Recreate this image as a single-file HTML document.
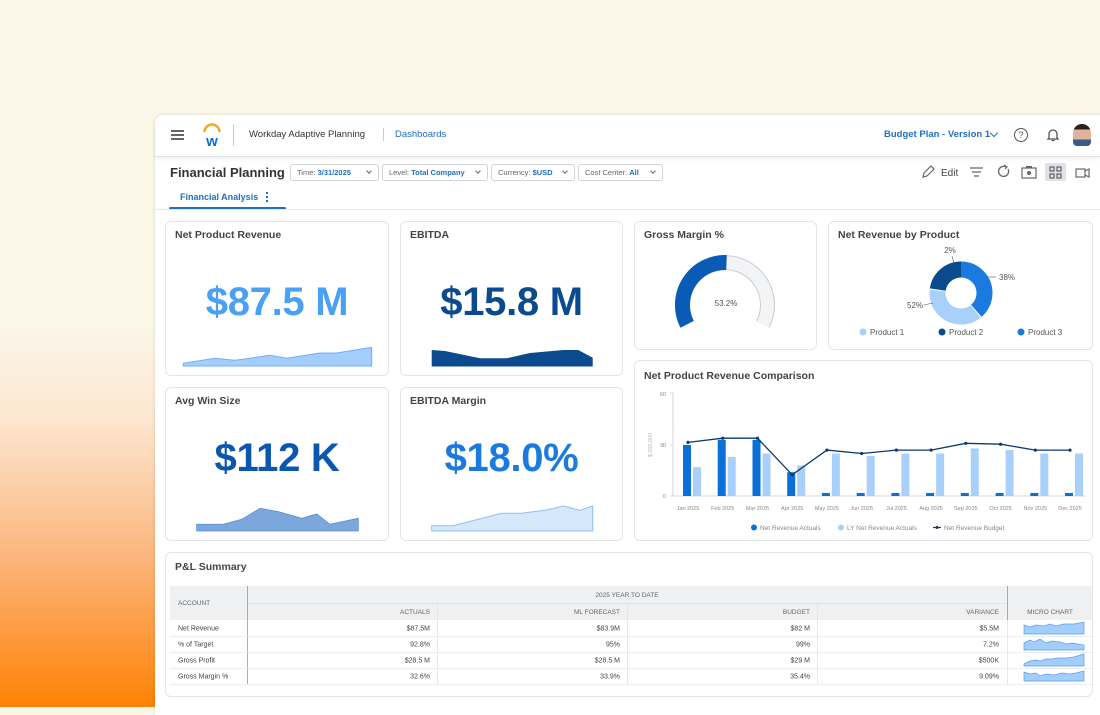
<!DOCTYPE html>
<html><head><meta charset="utf-8">
<style>
*{margin:0;padding:0;box-sizing:border-box}
body{width:1100px;height:707px;overflow:hidden;position:relative;font-family:"Liberation Sans",sans-serif;background:linear-gradient(180deg,#faf6e8 0px,#faf6e8 330px,#fde6d0 420px,#fbb47a 560px,#ff8204 707px)}
.a{position:absolute}
.app{position:absolute;left:155px;top:115px;width:960px;height:600px;background:#fff;border-radius:8px 0 0 0;box-shadow:0 0 3px rgba(0,0,0,.15)}
.hdr{position:absolute;left:155px;top:115px;width:945px;height:42px;border-bottom:1px solid #e4e4e4;box-shadow:0 2px 3px rgba(0,0,0,.06);border-radius:8px 0 0 0;background:#fff}
.card{position:absolute;background:#fff;border:1px solid #e3e5e8;border-radius:6px}
.ct{position:absolute;left:9px;top:7px;font-size:10.5px;font-weight:bold;color:#444}
.big{position:absolute;left:0;right:0;text-align:center;font-weight:bold;font-size:40px;letter-spacing:-0.3px}
.f{position:absolute;top:164px;height:17px;border:1px solid #cfd3d8;border-radius:3px;font-size:7.5px;color:#666;line-height:15px;padding-left:6px;white-space:nowrap}
.f b{color:#1f6fc5}
.f i{position:absolute;right:7px;top:4px;width:4px;height:4px;border-right:1px solid #666;border-bottom:1px solid #666;transform:rotate(45deg)}
</style></head><body>
<div class="app"></div>
<div class="hdr"></div>
<!-- header -->
<div class="a" style="left:171px;top:130px;width:13px;height:1.5px;background:#666;box-shadow:0 4px 0 #666,0 8px 0 #666"></div>
<svg class="a" style="left:201px;top:123px" width="22" height="24"><path d="M3.5 9 A7.5 7.5 0 0 1 18.5 9" fill="none" stroke="#f5a623" stroke-width="2.5"/><text x="11" y="23" text-anchor="middle" font-family="Liberation Sans" font-weight="bold" font-size="15" fill="#0a6fd6">w</text></svg>
<div class="a" style="left:233px;top:124px;width:1px;height:22px;background:#ccc"></div>
<div class="a" style="left:249px;top:129px;font-size:9.5px;color:#333">Workday Adaptive Planning</div>
<div class="a" style="left:383px;top:128px;width:1px;height:13px;background:#ccc"></div>
<div class="a" style="left:395px;top:129px;font-size:9.5px;color:#1f6fc5">Dashboards</div>
<div class="a" style="left:884px;top:129px;font-size:9.5px;color:#1f6fc5;font-weight:bold">Budget Plan - Version 1</div>
<div class="a" style="left:991px;top:130px;width:6px;height:6px;border-right:1.3px solid #1f6fc5;border-bottom:1.3px solid #1f6fc5;transform:rotate(45deg)"></div>
<div class="a" style="left:1014px;top:128px;width:14px;height:14px;border:1.4px solid #555;border-radius:50%;font-size:9px;color:#555;text-align:center;line-height:12px">?</div>
<svg class="a" style="left:1045px;top:127px" width="16" height="16"><path d="M4 11 V7 a4 4 0 0 1 8 0 V11 L13 12 H3 Z M6.5 13.5 h3" fill="none" stroke="#555" stroke-width="1.3"/></svg>
<div class="a" style="left:1073px;top:124px;width:18px;height:22px;border-radius:9px 9px 4px 4px;background:linear-gradient(180deg,#2a2222 0 25%,#e0b49a 25% 70%,#3a5a8a 70%)"></div>
<!-- toolbar -->
<div class="a" style="left:170px;top:165px;font-size:13px;font-weight:bold;color:#333">Financial Planning</div>
<div class="f" style="left:290px;width:89px">Time: <b>3/31/2025</b><i></i></div>
<div class="f" style="left:382px;width:106px">Level: <b>Total Company</b><i></i></div>
<div class="f" style="left:491px;width:84px">Currency: <b>$USD</b><i></i></div>
<div class="f" style="left:578px;width:85px">Cost Center: <b>All</b><i></i></div>
<div class="a" style="left:180px;top:192px;font-size:9px;font-weight:bold;color:#1f6fc5">Financial Analysis</div>
<div class="a" style="left:266px;top:192px;width:2px;height:2px;background:#1f6fc5;box-shadow:0 4px 0 #1f6fc5,0 8px 0 #1f6fc5"></div>
<div class="a" style="left:169px;top:207px;width:117px;height:3px;background:#1f6fc5;border-radius:2px"></div>
<div class="a" style="left:155px;top:209px;width:945px;height:1px;background:#e8e8e8"></div>
<svg class="a" style="left:920px;top:163px" width="180" height="18">
<path d="M3 14 L4 10 L11 3 L14 6 L7 13 Z" fill="none" stroke="#666" stroke-width="1.2"/>
<text x="21" y="13" font-family="Liberation Sans" font-size="10" fill="#444">Edit</text>
<path d="M50 5 h13 M52 9 h9 M54 13 h5" stroke="#666" stroke-width="1.3"/>
<path d="M86 4 A5 5 0 1 0 88 6" fill="none" stroke="#666" stroke-width="1.3"/><path d="M84 2 l3 2 -2 2" fill="none" stroke="#666" stroke-width="1.1"/>
<rect x="102" y="5" width="14" height="10" fill="none" stroke="#666" stroke-width="1.2"/><rect x="106" y="3" width="6" height="2" fill="#666"/><circle cx="109" cy="10" r="2" fill="#666"/>
<rect x="125" y="-1" width="21" height="20" rx="3" fill="#dfe3e8"/>
<rect x="130" y="4" width="4" height="4" fill="none" stroke="#555" stroke-width="1.1"/><rect x="137" y="4" width="4" height="4" fill="none" stroke="#555" stroke-width="1.1"/><rect x="130" y="11" width="4" height="4" fill="none" stroke="#555" stroke-width="1.1"/><rect x="137" y="11" width="4" height="4" fill="none" stroke="#555" stroke-width="1.1"/>
<rect x="156" y="6" width="9" height="8" fill="none" stroke="#666" stroke-width="1.2"/><path d="M165 8 l4 -2 v8 l-4 -2" fill="none" stroke="#666" stroke-width="1.2"/>
</svg>
<!-- cards -->
<div class="card" style="left:165px;top:221px;width:224px;height:155px"><div class="ct">Net Product Revenue</div><div class="big" style="top:58px;color:#4aa0f5">$87.5 M</div></div>
<div class="card" style="left:400px;top:221px;width:223px;height:155px"><div class="ct">EBITDA</div><div class="big" style="top:58px;color:#0b4a8f">$15.8 M</div></div>
<div class="card" style="left:165px;top:387px;width:224px;height:154px"><div class="ct">Avg Win Size</div><div class="big" style="top:48px;color:#0b57b0">$112 K</div></div>
<div class="card" style="left:400px;top:387px;width:223px;height:154px"><div class="ct">EBITDA Margin</div><div class="big" style="top:48px;color:#1a7ae0">$18.0%</div></div>
<div class="card" style="left:634px;top:221px;width:183px;height:129px"><div class="ct">Gross Margin %</div></div>
<div class="card" style="left:828px;top:221px;width:265px;height:129px"><div class="ct">Net Revenue by Product</div></div>
<div class="card" style="left:634px;top:360px;width:459px;height:181px"><div class="ct" style="top:9px">Net Product Revenue Comparison</div></div>
<div class="card" style="left:165px;top:552px;width:928px;height:145px"><div class="ct" style="top:8px">P&amp;L Summary</div></div>
<svg class="a" style="left:0;top:0" width="1100" height="707" font-family="Liberation Sans">
<path d="M183.3 363.3 L215 358.3 235 360.3 270 355.3 286.7 358.3 320 353 336.7 353 371.7 347.3 V366 H183.3Z" fill="#a3cdfb" stroke="#6fb0f5" stroke-width="1"/>
<path d="M431.7 350 L445 351 480 358.3 506.7 358.3 530 353 563.3 350 578.3 350 592.7 357.7 V366.5 H431.7Z" fill="#0b4a8f"/>
<path d="M196.7 524.3 L223.3 524.3 241.7 519.3 260 508.3 278.3 511.7 301.7 518.3 316.7 514 330 524.3 358.3 518.3 V531 H196.7Z" fill="#7ba7dc" stroke="#5a8fd0" stroke-width="0.8"/>
<path d="M431.7 525.7 L453.3 525.7 501.7 513.3 521.7 513.3 546.7 510 563.3 506 580 510.3 592.7 506 V531 H431.7Z" fill="#d6e8fc" stroke="#8dbff5" stroke-width="1"/>
<path d="M687.1 324.3 A42.5 42.5 0 1 1 762.9 324.3" fill="none" stroke="#c9ccd1" stroke-width="15"/>
<path d="M687.1 324.3 A42.5 42.5 0 1 1 762.9 324.3" fill="none" stroke="#f3f4f6" stroke-width="13"/>
<path d="M687.1 324.3 A42.5 42.5 0 0 1 726.5 262.5" fill="none" stroke="#0a5bb5" stroke-width="15"/>
<text x="726" y="306" text-anchor="middle" font-size="8" fill="#555">53.2%</text>
<g transform="rotate(-90 961 293)">
<circle cx="961" cy="293" r="23.5" fill="none" stroke="#1a7ae0" stroke-width="16" stroke-dasharray="57 200"/>
<circle cx="961" cy="293" r="23.5" fill="none" stroke="#a8d0fa" stroke-width="16" stroke-dasharray="0 58 55 200"/>
<circle cx="961" cy="293" r="23.5" fill="none" stroke="#0b4a8c" stroke-width="16" stroke-dasharray="0 114 35.5 200"/>
</g>
<text x="950" y="253" text-anchor="middle" font-size="8" fill="#555">2%</text><path d="M952 256 L954 263" stroke="#555" stroke-width="0.6"/>
<text x="999" y="280" font-size="8" fill="#555">38%</text><path d="M988 277 L996 277" stroke="#555" stroke-width="0.6"/>
<text x="907" y="308" font-size="8" fill="#555">52%</text><path d="M924 305 L933 303" stroke="#555" stroke-width="0.6"/>
<circle cx="863" cy="332" r="3.5" fill="#a8d0fa"/><text x="870" y="335" font-size="8" fill="#555">Product 1</text>
<circle cx="942" cy="332" r="3.5" fill="#0b4a8c"/><text x="949" y="335" font-size="8" fill="#555">Product 2</text>
<circle cx="1021" cy="332" r="3.5" fill="#1a7ae0"/><text x="1028" y="335" font-size="8" fill="#555">Product 3</text>
<g font-size="5.5" fill="#888">
<text x="666" y="396" text-anchor="end">60</text><text x="666" y="447" text-anchor="end">30</text><text x="666" y="498" text-anchor="end">0</text>
<text x="652" y="445" transform="rotate(-90 652 445)" text-anchor="middle" fill="#bbb">$,000,000</text>
</g>
<path d="M673 393 V496 H1086" fill="none" stroke="#ccc" stroke-width="0.8"/>
<path d="M670 393 h3 M670 445 h3 M670 496 h3" stroke="#ccc" stroke-width="0.8"/>
<g fill="#0a6fd6">
<rect x="683" y="445" width="8" height="51"/><rect x="717.7" y="439.9" width="8" height="56.1"/><rect x="752.5" y="439.9" width="8" height="56.1"/><rect x="787.2" y="472.2" width="8" height="23.8"/>
<rect x="821.9" y="493" width="8" height="3"/><rect x="856.7" y="493" width="8" height="3"/><rect x="891.4" y="493" width="8" height="3"/><rect x="926.1" y="493" width="8" height="3"/><rect x="960.8" y="493" width="8" height="3"/><rect x="995.6" y="493" width="8" height="3"/><rect x="1030.3" y="493" width="8" height="3"/><rect x="1065" y="493" width="8" height="3"/>
</g>
<g fill="#a8d0fa">
<rect x="693" y="467.1" width="8" height="28.9"/><rect x="727.7" y="456.9" width="8" height="39.1"/><rect x="762.5" y="453.5" width="8" height="42.5"/><rect x="797.2" y="465.4" width="8" height="30.6"/>
<rect x="831.9" y="453.5" width="8" height="42.5"/><rect x="866.7" y="456" width="8" height="40"/><rect x="901.4" y="453.5" width="8" height="42.5"/><rect x="936.1" y="453.5" width="8" height="42.5"/><rect x="970.8" y="448.4" width="8" height="47.6"/><rect x="1005.6" y="450.1" width="8" height="45.9"/><rect x="1040.3" y="453.5" width="8" height="42.5"/><rect x="1075" y="453.5" width="8" height="42.5"/>
</g>
<polyline points="688,442.4 722.7,438.2 757.5,438.2 792.2,474.8 826.9,450.1 861.7,453.5 896.4,450.1 931.1,450.1 965.8,443.3 1000.6,444.2 1035.3,450.1 1070,450.1" fill="none" stroke="#0b3a70" stroke-width="1.3"/>
<g fill="#0b3a70"><circle cx="688" cy="442.4" r="1.6"/><circle cx="722.7" cy="438.2" r="1.6"/><circle cx="757.5" cy="438.2" r="1.6"/><circle cx="792.2" cy="474.8" r="1.6"/><circle cx="826.9" cy="450.1" r="1.6"/><circle cx="861.7" cy="453.5" r="1.6"/><circle cx="896.4" cy="450.1" r="1.6"/><circle cx="931.1" cy="450.1" r="1.6"/><circle cx="965.8" cy="443.3" r="1.6"/><circle cx="1000.6" cy="444.2" r="1.6"/><circle cx="1035.3" cy="450.1" r="1.6"/><circle cx="1070" cy="450.1" r="1.6"/></g>
<g font-size="5.5" fill="#888" text-anchor="middle">
<text x="688" y="510">Jan 2025</text><text x="722.7" y="510">Feb 2025</text><text x="757.5" y="510">Mar 2025</text><text x="792.2" y="510">Apr 2025</text><text x="826.9" y="510">May 2025</text><text x="861.7" y="510">Jun 2025</text><text x="896.4" y="510">Jul 2025</text><text x="931.1" y="510">Aug 2025</text><text x="965.8" y="510">Sep 2025</text><text x="1000.6" y="510">Oct 2025</text><text x="1035.3" y="510">Nov 2025</text><text x="1070" y="510">Dec 2025</text>
</g>
<g font-size="6.5" fill="#888">
<circle cx="754" cy="527.5" r="3" fill="#0a6fd6"/><text x="760" y="530">Net Revenue Actuals</text>
<circle cx="841" cy="527.5" r="3" fill="#a8d0fa"/><text x="847" y="530">LY Net Revenue Actuals</text>
<path d="M933 527.5 h8" stroke="#0b3a70" stroke-width="1.2"/><circle cx="937" cy="527.5" r="1.5" fill="#0b3a70"/><text x="944" y="530">Net Revenue Budget</text>
</g>
<rect x="170" y="586" width="922" height="34" fill="#eef0f2"/>
<path d="M247.5 586 V684 M1007.5 586 V620" stroke="#999" stroke-width="0.8"/>
<path d="M248 603.5 H1007" stroke="#dcdfe3" stroke-width="0.8"/>
<path d="M437.5 603 V684 M627.5 603 V684 M817.5 603 V684 M1007.5 620 V684" stroke="#e2e4e7" stroke-width="0.8"/>
<path d="M170 636.5 H1092 M170 652.5 H1092 M170 668.5 H1092 M170 684.5 H1092" stroke="#e6e8eb" stroke-width="0.8"/>
<g font-size="6.5" fill="#666">
<text x="178" y="605">ACCOUNT</text>
<text x="627" y="597" text-anchor="middle">2025 YEAR TO DATE</text>
<text x="430" y="614" text-anchor="end">ACTUALS</text><text x="620" y="614" text-anchor="end">ML FORECAST</text><text x="810" y="614" text-anchor="end">BUDGET</text><text x="999" y="614" text-anchor="end">VARIANCE</text><text x="1050" y="614" text-anchor="middle">MICRO CHART</text>
</g>
<g font-size="7" fill="#444">
<text x="178" y="630.5">Net Revenue</text><text x="178" y="646.5">% of Target</text><text x="178" y="662.5">Gross Profit</text><text x="178" y="678.5">Gross Margin %</text>
<g text-anchor="end">
<text x="430" y="630.5">$87.5M</text><text x="620" y="630.5">$83.9M</text><text x="810" y="630.5">$82 M</text><text x="999" y="630.5">$5.5M</text>
<text x="430" y="646.5">92.8%</text><text x="620" y="646.5">95%</text><text x="810" y="646.5">99%</text><text x="999" y="646.5">7.2%</text>
<text x="430" y="662.5">$28.5 M</text><text x="620" y="662.5">$28.5 M</text><text x="810" y="662.5">$29 M</text><text x="999" y="662.5">$500K</text>
<text x="430" y="678.5">32.6%</text><text x="620" y="678.5">33.9%</text><text x="810" y="678.5">35.4%</text><text x="999" y="678.5">9.09%</text>
</g></g>
<g fill="#a3cdfb" stroke="#5aa0ee" stroke-width="0.7">
<path d="M1024 625 L1030 627 1036 625 1044 626 1050 624 1056 626 1064 624 1074 624 1084 622 V634 H1024Z"/>
<path d="M1024 643 L1030 640 1034 642 1040 639 1046 643 1052 641 1060 642 1066 644 1072 643 1084 645 V650 H1024Z"/>
<path d="M1024 664 L1030 661 1036 660 1040 661 1046 659 1052 659 1058 658 1066 658 1074 657 1084 654 V666 H1024Z"/>
<path d="M1024 672 L1030 674 1036 673 1040 676 1046 674 1054 675 1062 673 1070 674 1076 673 1084 671 V681 H1024Z"/>
</g>
</svg>
</body></html>
